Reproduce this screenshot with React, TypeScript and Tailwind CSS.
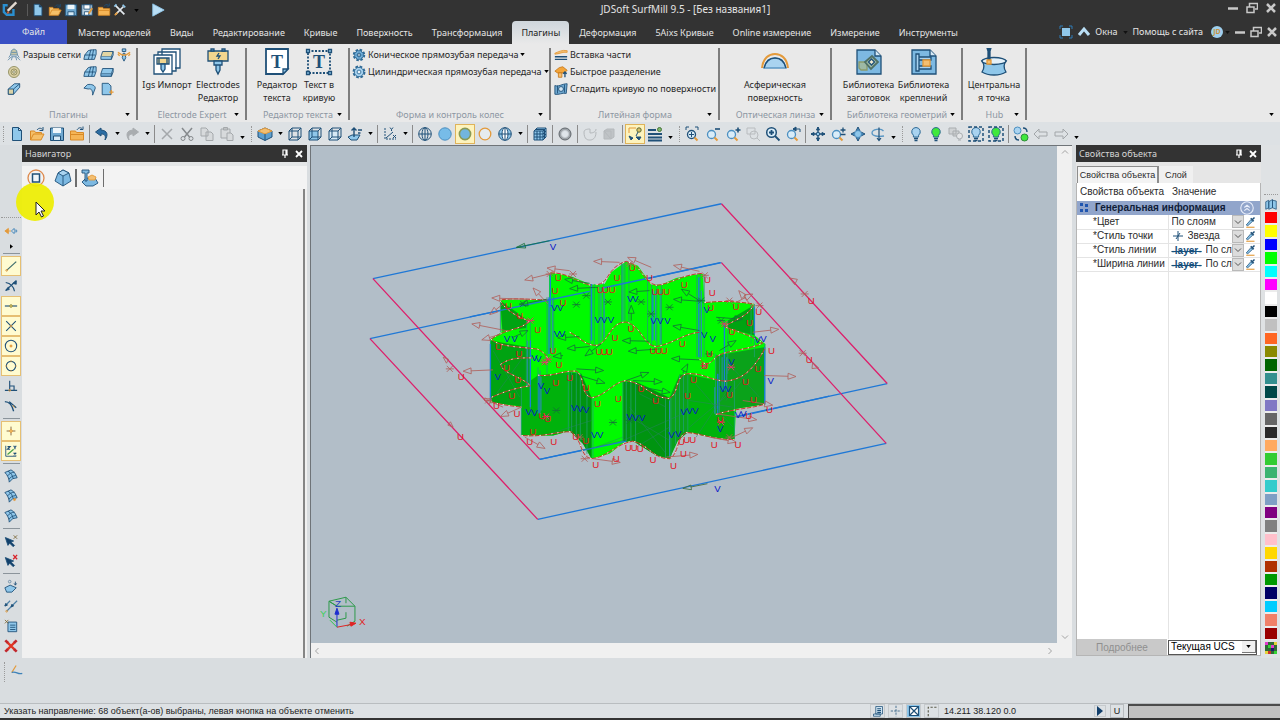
import React from 'react';

const NAVY = '#1f5078';
const SKY = '#8fc7ea';
const ORANGE = '#e39a3b';

const bulb = (fill: string) => (
  <>
    <path d="M8 1.5a4.3 4.3 0 0 0-2.6 7.7V11h5.2V9.2A4.3 4.3 0 0 0 8 1.5z" fill={fill} stroke="#2f6a96" />
    <path d="M6 12.5h4M6.5 14.5h3" stroke={NAVY} strokeWidth="1.6" />
  </>
);

const lens = (color = '#4b8fc0') => (
  <>
    <circle cx="6.5" cy="8.5" r="4" fill="#d9ecf8" stroke={color} strokeWidth="1.3" />
    <path d="M9.5 11.5l3 3" stroke={ORANGE} strokeWidth="2" />
  </>
);

const wireCube = (front: string) => (
  <>
    <path d="M2 5h9v9H2z" fill={front} />
    <path d="M2 5l3-3h9v9l-3 3M11 5l3-3M5 2v9h9M2 14l3-3" />
  </>
);

const surface = (
  <>
    <path d="M1 4l7-3c4 2 6 6 7 9l-5 1-4 4C6 11 4 7 1 4z" fill={SKY} />
    <path d="M4.5 2.5c4 2 5 5 6 8.500M4 8c2-3 5-4 8-4.500M5.500 12c2-3 4-4 8-4.500" />
  </>
);

const icons: Record<string, React.ReactNode> = {
  newFile: <path d="M3.5 1.5h6l3 3v10h-9zM9.5 1.5v3h3" fill={SKY} />,
  open: (
    <>
      <path d="M1.5 14V5h4l1 1.5h6V8M1.5 14l3-6h10.5l-3 6z" fill="#f5c069" stroke="#d98a26" />
      <path d="M8 4c2-2.5 4-2 5.5-.5M14 1v3.5h-3.5" stroke={NAVY} />
    </>
  ),
  save: (
    <>
      <path d="M1.5 2h13v12.5h-13z" fill="#6fa8d0" />
      <path d="M4 2h8v5H4z" fill="#eef6fb" stroke="none" />
      <path d="M4.5 10h7v4.5h-7z" fill="#d6e9f5" />
    </>
  ),
  saveAs: (
    <>
      <path d="M2 2h12v12H2z" fill="#b9cfdf" />
      <path d="M4.5 2h7v5h-7zM5 10h5v4H5z" fill="#fff" />
      <path d="M14 6l-4 6" stroke={ORANGE} strokeWidth="2" />
    </>
  ),
  folder: (
    <>
      <path d="M1.5 14V5h5l1 1.5h7V14z" fill="#f5b556" stroke="#d98a26" />
      <path d="M1.5 8.5h13" stroke="#d98a26" />
      <path d="M8 4c1-2 3-3 5-1.5M14 .5v3h-3" stroke={NAVY} />
    </>
  ),
  undo: <path d="M7 2L1.5 6 7 10V8c4 0 5 2 4 6 3.5-5 2.5-9.5-4-10z" fill="#2b6da3" />,
  redo: <path d="M9 2l5.5 4L9 10V8c-4 0-5 2-4 6-3.5-5-2.5-9.5 4-10z" fill="#a9adb0" stroke="#a9adb0" />,
  cross: <path d="M3 3l10 10M13 3L3 13" stroke="#a4a8ab" strokeWidth="1.5" />,
  cut: (
    <g stroke="#85898c">
      <path d="M3 2l7.5 9M13 2l-7.5 9" strokeWidth="1.5" />
      <circle cx="4" cy="12.5" r="2" />
      <circle cx="12" cy="12.5" r="2" />
    </g>
  ),
  copy: <path d="M2 2h5l2 2v6H2zM7 6h5l2 2v6.5H7z" stroke="#a4a8ab" fill="#d7dadc" />,
  paste: (
    <g stroke="#a4a8ab" fill="#d7dadc">
      <path d="M2 3h9v9H2zM4.5 1.5h4V4h-4z" />
      <path d="M8 7h4l2 2v5.5H8z" />
    </g>
  ),
  block: (
    <>
      <path d="M8 2l7 3v6l-7 3.5L1 11V5z" fill="#5f9fce" />
      <path d="M8 2l7 3-7 3-7-3z" fill="#f3bf72" stroke={ORANGE} />
      <path d="M8 8v6.5" />
    </>
  ),
  cubeWire: wireCube('none'),
  cubeFront: wireCube(SKY),
  cubeRight: wireCube('#d6e9f5'),
  plane: (
    <>
      <path d="M1 11l4-2h8l-3 5H4z" fill={SKY} />
      <path d="M7 11V2M4.5 4.5L7 2l2.5 2.5M11 4h4M11 7h2.5" strokeWidth="1.4" />
    </>
  ),
  axes: (
    <>
      <path d="M3 2v11h11" strokeDasharray="2 1" />
      <path d="M4 12l7-6M8 1.5l1.5 2 1.5-2M9.5 3.5V5M11 9l3 3M14 9l-3 3" />
    </>
  ),
  globe: (
    <>
      <circle cx="8" cy="8" r="6.3" />
      <ellipse cx="8" cy="8" rx="3" ry="6.3" />
      <path d="M2 8h12M8 2v12" />
    </>
  ),
  globeBlue: (
    <>
      <circle cx="8" cy="8" r="6.3" fill={SKY} />
      <ellipse cx="8" cy="8" rx="3" ry="6.3" fill="#fff" />
      <path d="M2 8h12M8 2v12" />
    </>
  ),
  sphere: <circle cx="8" cy="8" r="6.2" fill="#77bce8" stroke="#4b8fc0" />,
  sphereRing: <circle cx="8" cy="8" r="5.6" fill="#72b5de" stroke="#8a9a55" strokeWidth="1.6" />,
  ring: <circle cx="8" cy="8" r="5.8" fill="#e6ebee" stroke={ORANGE} strokeWidth="1.3" />,
  ringGray: (
    <>
      <circle cx="8" cy="8" r="6" fill="#9da3a8" stroke="#62686d" />
      <circle cx="8" cy="8" r="3.6" fill="#dfe5ea" stroke="#c7cdd2" />
    </>
  ),
  gridCube: (
    <>
      <path d="M2 5l3-3h9v9l-3 3H2z" fill={SKY} />
      <path d="M2 5h9v9M11 5l3-3M5 5v9M8 5v9M2 8h9l3-3M2 11h9l3-3M3.5 3.5h9V12" />
    </>
  ),
  ghostCup: <path d="M2 6c0 8 4 8 6 8s6-1 6-8M2 6c0-3 5-3 6-3v4c3 0 6-1 6-4" stroke="#b5b9bc" />,
  ghostBlock: <path d="M2 5h7v8H2zM2 5l3-2h7v8l-3 2z" stroke="#b5b9bc" fill="#bfc3c6" />,
  pick: (
    <>
      <path d="M2 2v5M2 2h7" stroke={ORANGE} />
      <circle cx="12" cy="4" r="2.2" fill="#d6c06a" stroke="#5c6a35" />
      <path d="M11 6l-2 4M2 10l2 4 2-2zM9 11l3 3 2-3z" fill={NAVY} />
    </>
  ),
  layers: (
    <>
      <path d="M1 4h8M1 8h14M1 11.5h14M1 14.5h14" strokeWidth="1.8" />
      <circle cx="12.5" cy="3.5" r="2" fill="#7db96a" stroke="#47733a" />
    </>
  ),
  zoomWindow: (
    <>
      {lens(NAVY)}
      <path d="M4 8.5h5M6.5 6v5M1 1h3M1 1v3M10 1h3v3" />
    </>
  ),
  zoomMinus: <>{lens()}<path d="M10 3h5" strokeWidth="1.6" /></>,
  zoomPlus: <>{lens()}<path d="M10.5 4h5M13 1.5v5" strokeWidth="1.6" /></>,
  zoomGhost: (
    <g stroke="#b9bcbf">
      <path d="M2 2h8v6H2z" />
      <circle cx="9" cy="9" r="4" />
      <path d="M12 12l3 3" />
    </g>
  ),
  zoomIn: (
    <>
      <circle cx="6.5" cy="6.5" r="4.8" fill="#d9ecf8" strokeWidth="1.5" />
      <path d="M10 10l4.5 4.5M4 6.5h5M6.5 4v5" strokeWidth="1.8" />
    </>
  ),
  zoomBack: <>{lens()}<path d="M8 3h7M8 3l3-2v4zM15 3v3" fill={NAVY} /></>,
  zoomRange: <>{lens()}<path d="M10.5 4h5M13 1.5v5M10.5 8.5h5" strokeWidth="1.3" /></>,
  pan: (
    <>
      <path d="M1 8h14M8 1v14" strokeWidth="1.3" />
      <path d="M8 1L6.500 4h3zM8 15l-1.500-3h3zM1 8l3-1.500v3zM15 8l-3-1.500v3z" fill={NAVY} />
      <circle cx="8" cy="8" r="1.8" fill={SKY} />
    </>
  ),
  orbit: (
    <>
      <path d="M8 1L6 5h4zM8 15l-2-4h4zM1 8l4-2v4zM15 8l-4-2v4z" fill="#4d8fc0" />
      <circle cx="8" cy="8" r="3.5" fill={SKY} stroke="#4d8fc0" />
    </>
  ),
  rotate: (
    <>
      <path d="M13.500 5C11 2 2 3 2 7c0 3 6 4 12 3" stroke="#5b97c4" strokeWidth="1.3" />
      <path d="M9 1.500v13M7 12l2 2.500L11 12" strokeWidth="1.2" />
    </>
  ),
  bulb: bulb('#a9d3f0'),
  bulbGreen: bulb('#3fe83c'),
  bulbGhost: (
    <g stroke="#a9adb0">
      <path d="M1 2h7v6H1zM5 5h6v5H5z" fill="#cfd2d4" />
      <circle cx="11.5" cy="10" r="3" fill="#e4e6e8" />
      <path d="M10 14h3" />
    </g>
  ),
  bulbSelect: <>{bulb('#a9d3f0')}<path d="M1 1h14v14H1z" strokeDasharray="3 2" strokeWidth="1.5" /></>,
  bulbSelectGreen: <>{bulb('#3fe83c')}<path d="M1 1h14v14H1z" strokeDasharray="3 2" strokeWidth="1.5" /></>,
  swap: (
    <>
      <circle cx="4.5" cy="4.5" r="3.5" fill="#a9d3f0" stroke="#4b8fc0" />
      <circle cx="11.5" cy="11.5" r="3.5" fill="#3fe83c" stroke="#2f8a3a" />
      <path d="M10 2c3 0 4 2 4 4M2 10c0 3 2 4 4 4" strokeWidth="1.4" />
    </>
  ),
  back: <path d="M1 8l5-5v3h8v4H6v3z" stroke="#a2a6a9" />,
  forward: <path d="M15 8l-5-5v3H2v4h8v3z" stroke="#a2a6a9" />,
  tools: (
    <>
      <path d="M3 13L12 4M3 3l10 10" stroke="#e3e9ee" strokeWidth="2" />
      <path d="M11 2l3 3M1.5 4L4 1.5" stroke={SKY} strokeWidth="2" />
      <path d="M2 14l3-3" stroke={ORANGE} strokeWidth="2" />
    </>
  ),
  play: <path d="M2 1l13 7-13 7z" fill="#b9def5" stroke="#8fc7ea" />,
  // left snap bar
  snapMove: (
    <>
      <path d="M1 8l4-3v6zM5 8h3M4 6v4" stroke={ORANGE} fill={ORANGE} />
      <path d="M8.5 8l3-3v2h3v2h-3v2z" stroke="#3e82b8" />
    </>
  ),
  snapLine: <><path d="M3 13L14 3" stroke="#3c6b6b" strokeWidth="1.4" /><circle cx="3" cy="13" r="1" stroke={ORANGE} /></>,
  snapNear: (
    <>
      <path d="M2 4c6 1 9 5 10 10M2 13L14 2" strokeWidth="1.4" />
      <path d="M10 5l4-3v4zM2 13l3-4 1 3z" fill={NAVY} />
    </>
  ),
  snapMid: <><path d="M1 8h14" strokeWidth="1.3" /><circle cx="8" cy="8" r="1.5" fill="#f3cd74" stroke="#8c8a3a" /></>,
  snapCross: <><path d="M2.5 2.5l11 11M13.5 2.5l-11 11" strokeWidth="1.2" /><circle cx="8" cy="8" r="1" stroke={ORANGE} /></>,
  snapCenter: <><circle cx="8" cy="8" r="6.5" strokeWidth="1.2" /><circle cx="8" cy="8" r="1.2" fill={ORANGE} stroke={ORANGE} /></>,
  snapQuad: <><circle cx="8" cy="8" r="5.3" strokeWidth="1.3" /><path d="M8 1.5v2M8 12.5v2M1.5 8h2M12.5 8h2" stroke={ORANGE} /></>,
  snapPerp: <><path d="M6.5 2v11M1 13h14M6.5 8h5v5" strokeWidth="1.3" /><circle cx="6.5" cy="13" r="1" stroke={ORANGE} /></>,
  snapTan: <><path d="M1 3c5 0 8 3 10 11M6 3l8 7" strokeWidth="1.5" /><path d="M10 7l2 3" stroke={ORANGE} /></>,
  snapPoint: <><path d="M8 3v10M3 8h10" stroke="#7d5a35" /><circle cx="8" cy="8" r="1.5" fill="#f3cd74" stroke={ORANGE} /></>,
  snapAxis: (
    <>
      <path d="M2 2v12M2 14h12" />
      <path d="M4 3h3L4 6h3M11 2l1.5 2L14 2M12.5 4v2M11 10l3 3M14 10l-3 3" strokeWidth="1.3" />
      <path d="M4 12l7-6" stroke="#4aa04a" strokeWidth="1.4" />
    </>
  ),
  surface,
  surfaceMark: <>{surface}<circle cx="12" cy="12" r="1.2" fill={ORANGE} stroke={ORANGE} /></>,
  select: (
    <>
      <path d="M1.5 4l3 9 2-2.5 4 4 1.5-1.5-4-4L11 8z" fill="#12406b" />
      <path d="M11 1.5l4 4M15 1.5l-4 4" stroke="#7d6a3a" />
    </>
  ),
  deselect: (
    <>
      <path d="M1.5 4l3 9 2-2.5 4 4 1.5-1.5-4-4L11 8z" fill="#12406b" />
      <path d="M10.5 1l4.500 5M15 1l-4.500 5" stroke="#d8232a" strokeWidth="1.5" />
    </>
  ),
  project: (
    <>
      <path d="M1 10l6-3 7 3-5 5H3z" fill={SKY} />
      <circle cx="6.5" cy="3" r="1.5" stroke="#6a8aa5" />
      <path d="M13 3v4M11.5 5L13 7l1.5-2" />
    </>
  ),
  offset: (
    <>
      <path d="M3 14L15 2M1 8l6-6" stroke="#4b7fa5" strokeWidth="1.3" />
      <path d="M1 8l3-1-2-2zM8 9l3-1-2-2z" fill={NAVY} />
      <circle cx="3" cy="14" r="1" stroke={ORANGE} />
    </>
  ),
  list: (
    <>
      <path d="M4.5 3.5h10v11h-10z" fill={SKY} />
      <path d="M7 7h6M7 9.5h6M7 12h6" />
      <path d="M1 1l4 4M5 1L1 5" stroke="#7d6a3a" />
    </>
  ),
  cancel: (
    <>
      <path d="M3 3l10 10M13 3L3 13" stroke="#e03524" strokeWidth="2.6" />
      <path d="M1.5 1.5l3 3M14.5 1.5l-3 3M1.5 14.5l3-3M14.5 14.500l-3-3" stroke="#c0282e" strokeWidth="3" />
    </>
  ),
  sketch: <><path d="M2 12l5-8" stroke={ORANGE} strokeWidth="1.4" /><path d="M2 12c5-2 7 3 12 1" stroke="#3e82b8" strokeWidth="1.4" /></>,
  // ribbon, small
  mesh: (
    <>
      <path d="M5 3l3-2 3 2 1 5H4z" fill="#c9c7a8" stroke="#5f8aa8" />
      <path d="M1 14l4-4h6l4 4M4 8l-2 3M12 8l2 3M5 14l1-4M11 14l-1-4M5 5h6" stroke="#5f8aa8" />
    </>
  ),
  washer: (
    <>
      <circle cx="8" cy="8" r="6.3" fill="#dcd0a4" stroke="#8c8a5a" />
      <circle cx="8" cy="8" r="3.5" stroke="#8c8a5a" />
      <circle cx="8" cy="8" r="1.5" fill="#e9e9e9" stroke="#8c8a5a" />
    </>
  ),
  bar: (
    <>
      <path d="M1.5 8l7-6h6v4l-7 8h-6z" fill={SKY} />
      <path d="M1.5 8h6v6h-6z" fill="#d9d2a8" />
      <path d="M7.5 8l7-6" />
    </>
  ),
  patch: (
    <>
      <path d="M1 13l1-5 4-5c3-1 6-1 9-1v5l-2 6z" fill={SKY} />
      <path d="M2 8h12M9 2L6 13M12 2l-2 11" />
    </>
  ),
  slab: <><path d="M1 10l2-6h12l-2 6z" fill="#e2d6a3" /><path d="M1 10v3h12v-3M13 13l2-5V4" fill={SKY} /></>,
  slabBlue: <><path d="M1 10l2-6h12l-2 6z" fill={SKY} /><path d="M1 10v3h12v-3M13 13l2-5V4" fill="#6fa8d0" /></>,
  fold: <path d="M1 7l4-4c5-1 9 1 9 4l-3 8c0-5-1-8-5-7z" fill={SKY} />,
  addFile: <><path d="M2.5 1.5h7l3 3v10h-10z" fill={SKY} /><path d="M13 9v5M10.5 11.5h5" stroke={ORANGE} strokeWidth="1.5" /></>,
  spindle: (
    <>
      <path d="M6 1h4v3H6zM7 6h2l1 5-2 4-2-4z" fill={SKY} />
      <path d="M1 5l5 3h4l5-3M3 9l-2-2M13 9l2-2" stroke={ORANGE} strokeWidth="1.6" />
    </>
  ),
  bevelGear: (
    <>
      <circle cx="8" cy="8" r="5.9" stroke="#2f6a96" strokeWidth="2.4" strokeDasharray="2.8 1.833" />
      <circle cx="8" cy="8" r="5" fill="#7ab4dc" stroke="#2f6a96" />
      <path d="M8 4v8M4 8h8M5 5l6 6M11 5l-6 6" stroke="#3e7fae" />
      <circle cx="8" cy="8" r="1.6" fill="#e9f3fa" />
    </>
  ),
  spurGear: (
    <>
      <circle cx="8" cy="8" r="6.2" stroke="#2f6a96" strokeWidth="2.4" strokeDasharray="3 1.869" />
      <circle cx="8" cy="8" r="5.300" fill="#a9d3f0" stroke="#2f6a96" />
      <circle cx="8" cy="8" r="2.2" fill="#e9f3fa" stroke="#2f6a96" />
    </>
  ),
  insert: (
    <>
      <path d="M1 6c5-2 8-4 14-3v2C10 4 6 7 1 7z" fill="#f3bf72" stroke={ORANGE} />
      <path d="M1 10h14M1 13h14" strokeWidth="1.5" />
    </>
  ),
  split: (
    <>
      <path d="M1 7l5-4 4-1 5 4-3 3H4z" fill="#f3a53a" stroke="#c97a1d" />
      <path d="M5 9h4v5H5z" fill="#f3bf72" stroke="#c97a1d" />
      <path d="M12.500 14V8M10.500 10l2-2 2 2" strokeWidth="1.5" />
    </>
  ),
  smooth: (
    <>
      <path d="M1 4c4 2 8-2 14-2l-1 11c-5-1-8 2-13 1z" fill="#6fa8d0" />
      <circle cx="8" cy="8" r="2.8" fill="#cfe4f3" />
      <path d="M4 4v9M12 3v9" />
    </>
  ),
  // status bar
  sheet: <><path d="M5 2h9v10H5zM2 12h9v3H2z" fill="#cfe4f3" /><path d="M7 5h5M7 7.5h5M7 10h5" strokeWidth="1.4" /></>,
  crosshair: <path d="M8 1v14M1 8h14" strokeDasharray="3 1.5" />,
  boxCross: <><path d="M2 2h12v12H2z" fill="#fff" strokeWidth="1.6" /><path d="M2 2l12 12M14 2L2 14" strokeWidth="1.6" /></>,
  corner: <path d="M3 15V3h12" strokeDasharray="3 2" stroke="#5a5a4a" strokeWidth="1.5" />,
  picker: (
    <>
      <path d="M3 12l6-7 2.5 2L5 13z" fill={SKY} />
      <path d="M9 3l4 4M11 5l3-3" strokeWidth="2" />
      <path d="M3 15h11" stroke={ORANGE} strokeWidth="1.5" />
    </>
  ),
  sheets: <path d="M1 5l4-2v10l-4 2zM5 5l5-3v11l-5 2zM10 3l5 1v11l-5-2z" fill={SKY} />,
};

const Icon = ({ name, className = 'w-4 h-4' }: { name: string; className?: string }) => (
  <svg viewBox="0 0 16 16" className={`${className} shrink-0`} fill="none" stroke={NAVY} strokeWidth="1" aria-hidden="true">
    {icons[name]}
  </svg>
);

const Caret = ({ className = 'text-black' }: { className?: string }) => (
  <svg viewBox="0 0 6 4" className={`w-[5px] h-[3px] shrink-0 ${className}`} aria-hidden="true">
    <path d="M0 0h6L3 4z" fill="currentColor" />
  </svg>
);

const WindowButtons = ({ className }: { className: string }) => (
  <div className={`flex items-center text-[#c9c9c9] ${className}`}>
    <button aria-label="Свернуть">
      <svg viewBox="0 0 12 12" className="w-3 h-3"><path d="M1 6.5h10" stroke="currentColor" strokeWidth="2.5" /></svg>
    </button>
    <button aria-label="Восстановить">
      <svg viewBox="0 0 12 12" className="w-3 h-3" fill="none" stroke="currentColor" strokeWidth="1.5"><path d="M1 5h7v5.5H1zM3.5 4.5v-3h8V7H9" /></svg>
    </button>
    <button aria-label="Закрыть">
      <svg viewBox="0 0 12 12" className="w-3 h-3"><path d="M2 2l8 8M10 2l-8 8" stroke="currentColor" strokeWidth="2.5" /></svg>
    </button>
  </div>
);

const TitleBar = () => (
  <header className="flex items-center h-5 bg-[#333333] text-[#e4e4e4]">
    <div className="flex items-center w-[165px]">
      <svg viewBox="0 0 20 18" className="w-5 h-4.5 mr-2" fill="none" aria-hidden="true">
        <path d="M8 4H4v7l3 3h7V8" stroke="#2a8fd0" strokeWidth="2.5" />
        <path d="M8 10l9-9" stroke="#e0d8d0" strokeWidth="2.5" />
        <path d="M8 10l-1 3 3-1z" fill="#d8653a" />
      </svg>
      <span className="w-px h-3 bg-[#5a5a5a] mr-0.5" />
      {['newFile', 'open', 'save', 'saveAs', 'folder', 'tools'].map(name => (
        <button key={name} aria-label={name} className="flex justify-center w-[17px]">
          <Icon name={name} className="w-3.5 h-3.5" />
        </button>
      ))}
      <Caret className="text-black ml-1.5 mr-1" />
      <button aria-label="play" className="ml-2"><Icon name="play" className="w-3.5 h-3.5" /></button>
    </div>
    <h1 className="flex-1 text-center text-[10px] leading-4 pb-0.5">JDSoft SurfMill 9.5 - [Без названия1]</h1>
    <WindowButtons className="w-[74px] justify-end gap-[7px] pr-[3px] pb-1" />
  </header>
);

const menuItems = [
  'Мастер моделей', 'Виды', 'Редактирование', 'Кривые', 'Поверхность', 'Трансформация',
  'Плагины', 'Деформация', '5Aixs Кривые', 'Online измерение', 'Измерение', 'Инструменты',
];

const MenuBar = () => (
  <nav className="flex gap-px h-6 bg-[#333333] text-[#e4e4e4] text-[9px]">
    <button className="w-[67px] bg-[#3a50c4] mr-px">Файл</button>
    {menuItems.map(item => (
      <button
        key={item}
        className={item === 'Плагины'
          ? 'px-[9px] mt-px pt-px rounded-t-sm bg-linear-to-b from-[#cfd6dc] to-[#e9e9e9] text-[#222222]'
          : 'px-[9px] pt-0.5'}
      >
        {item}
      </button>
    ))}
    <div className="flex items-center ml-auto pr-0.5">
      <svg viewBox="0 0 14 14" className="w-3.5 h-3.5 mr-1" fill="none" aria-hidden="true">
        <path d="M3 3h8v8H3z" fill={SKY} />
        <path d="M1 4V1h3M10 1h3v3M13 10v3h-3M4 13H1v-3" stroke="#2f7db8" />
      </svg>
      <svg viewBox="0 0 14 14" className="w-3.5 h-3.5 mr-1" fill="none" aria-hidden="true">
        <path d="M2 10l5-6 5 6" stroke="#b9def5" strokeWidth="3" />
      </svg>
      <button className="flex items-center gap-1.5">Окна <Caret className="text-[#111111]" /></button>
      <button className="ml-1">Помощь с сайта</button>
      <button aria-label="JD" className="flex items-center gap-0.5 ml-2 mr-1">
        <span className="flex items-center justify-center w-3 h-3 rounded-full bg-[#9fd0ee] text-[7px] font-bold text-[#c9943f]">JD</span>
        <Caret className="text-[#111111]" />
      </button>
      <WindowButtons className="gap-1" />
    </div>
  </nav>
);

const SmallButton = ({ icon, label, caret }: { icon: string; label?: string; caret?: boolean }) => (
  <button aria-label={label ?? icon} className="flex items-center gap-0.5 h-[17px] whitespace-nowrap">
    <Icon name={icon} className="w-3.5 h-3.5" />
    {label && <span>{label}</span>}
    {caret && <Caret />}
  </button>
);

const BigButton = ({ lines, className, children }: { lines: string[]; className: string; children: React.ReactNode }) => (
  <button className={`flex flex-col items-center leading-[13px] whitespace-nowrap ${className}`}>
    <svg viewBox="0 0 28 28" className="w-7 h-7 mb-0.5 shrink-0" fill="none" stroke={NAVY} strokeWidth="1.3" aria-hidden="true">
      {children}
    </svg>
    {lines.map(line => <span key={line}>{line}</span>)}
  </button>
);

const Group = ({ title, className, children }: { title: string; className: string; children: React.ReactNode }) => (
  <section className={`flex flex-col justify-between shrink-0 border-r-2 border-[#7d7d7d] ${className}`}>
    {children}
    <div className="flex items-center h-[11px] pl-3 pr-1.5">
      <h2 className="flex-1 text-center text-[#8d97a3] leading-[11px] whitespace-nowrap">{title}</h2>
      <Caret />
    </div>
  </section>
);

const Ribbon = () => (
  <div className="flex h-[78px] pt-1 pb-0.5 bg-[#e9e9e9] text-[9px] text-[#262626]">
    <Group title="Плагины" className="w-[138px]">
      <div className="flex pl-[7px] -mt-0.5">
        <div className="flex flex-col w-[76px]">
          <SmallButton icon="mesh" label="Разрыв сетки" />
          <SmallButton icon="washer" />
          <SmallButton icon="bar" />
        </div>
        <div className="grid grid-cols-3 gap-x-[3px]">
          {['patch', 'slab', 'spindle', 'patch', 'slabBlue'].map((name, i) => <SmallButton key={i} icon={name} />)}
          <span />
          <SmallButton icon="fold" />
          <SmallButton icon="addFile" />
        </div>
      </div>
    </Group>
    <Group title="Electrode Expert" className="w-[109px]">
      <div className="flex pl-[3px]">
        <BigButton lines={['Igs Импорт']} className="w-[52px]">
          <path d="M9 7V1h18v19h-5M5 10V4h18v19h-4" fill="#fff" />
          <path d="M1 7h18v19H1z" fill="#fff" />
          <path d="M4 10h12v6H4z" fill="#f3d68e" />
          <path d="M8 16h4v5l-2 3-2-3zM6 10v6M14 10v6" fill={SKY} />
        </BigButton>
        <BigButton lines={['Electrodes', 'Редактор']} className="w-[50px]">
          <path d="M4 3h20v10H4z" fill="#f3d68e" />
          <path d="M7 1h3v2H7zM18 1h3v2h-3zM10 13h8v4h-8zM12 17h4v5l-2 4-2-4z" fill={SKY} />
          <path d="M15 5l-2 3h3l-2 3" />
        </BigButton>
      </div>
    </Group>
    <Group title="Редактор текста" className="w-[103px]">
      <div className="flex pl-2">
        <BigButton lines={['Редактор', 'текста']} className="w-[44px]">
          <path d="M3 1h22v20l-5 5H3z" fill="#fff" strokeWidth="1.8" />
          <path d="M25 21h-5v5z" fill={SKY} />
          <text x="14" y="20" textAnchor="middle" fontSize="18" fontWeight="700" fill={NAVY} stroke="none" fontFamily="Liberation Serif, serif">T</text>
        </BigButton>
        <BigButton lines={['Текст в', 'кривую']} className="w-[40px]">
          <path d="M3 3h22v22H3z" strokeDasharray="2 1.5" strokeWidth="1.8" />
          <path d="M1.5 1.5h3v3h-3zM23.5 1.5h3v3h-3zM1.5 23.5h3v3h-3zM23.5 23.5h3v3h-3z" fill={SKY} />
          <text x="14" y="20" textAnchor="middle" fontSize="18" fontWeight="700" fill={NAVY} stroke="none" fontFamily="Liberation Serif, serif">T</text>
        </BigButton>
      </div>
    </Group>
    <Group title="Форма и контроль колес" className="w-[201px]">
      <div className="flex flex-col items-start pl-0.5 -mt-0.5">
        <SmallButton icon="bevelGear" label="Коническое прямозубая передача" caret />
        <SmallButton icon="spurGear" label="Цилиндрическая прямозубая передача" caret />
      </div>
    </Group>
    <Group title="Литейная форма" className="w-[169px]">
      <div className="flex flex-col items-start pl-[3px] -mt-0.5">
        <SmallButton icon="insert" label="Вставка части" />
        <SmallButton icon="split" label="Быстрое разделение" />
        <SmallButton icon="smooth" label="Сгладить кривую по поверхности" />
      </div>
    </Group>
    <Group title="Оптическая линза" className="w-[112px]">
      <div className="flex justify-center">
        <BigButton lines={['Асферическая', 'поверхность']} className="w-[80px]">
          <path d="M3 20c2-8 7-10 11-10s9 2 11 10z" fill="#a9d3f0" stroke="#5b97c4" />
          <path d="M3 20c2-8 7-10 11-10s9 2 11 10" stroke={NAVY} />
          <path d="M1 20C2 10 8 6 14 6s12 4 13 14" stroke={ORANGE} strokeWidth="2" />
        </BigButton>
      </div>
    </Group>
    <Group title="Библиотека геометрий" className="w-[131px]">
      <div className="flex pl-[9px]">
        <BigButton lines={['Библиотека', 'заготовок']} className="w-[55px]">
          <path d="M2 2h18l6 6v18H2z" fill="#7db9e2" />
          <path d="M20 2v6h6" fill="#d6e9f5" />
          <path d="M4 14h8v8H6l-2-2z" fill="#9eb9a5" stroke="#8a9a6a" />
          <path d="M10 14l7-6 6 6-7 7z" fill="#9eb9a5" stroke="#4f7066" strokeWidth="1.8" />
          <path d="M16.500 11l3 3-3 3-3-3z" fill="#f0ead0" />
        </BigButton>
        <BigButton lines={['Библиотека', 'креплений']} className="w-[55px]">
          <path d="M2 2h18l6 6v18H2z" fill="#7db9e2" />
          <path d="M20 2v6h6" fill="#d6e9f5" />
          <path d="M6 6h3v17H6zM9 9h12v3H9zM9 18h12v3H9z" fill="#a9d3f0" />
          <path d="M13 12h7v6h-7z" fill="#f3bf72" stroke={ORANGE} />
        </BigButton>
      </div>
    </Group>
    <Group title="Hub" className="w-[64px]">
      <div className="flex justify-center">
        <BigButton lines={['Центральна', 'я точка']} className="w-[56px]">
          <path d="M2 13c3 4 2 8 0 11 6 4 18 4 24 0-2-3-3-7 0-11z" fill="#8fc7ea" />
          <ellipse cx="14" cy="13" rx="12" ry="3.5" fill="#e4f0f8" />
          <path d="M7 0h4l-1 3v9H8V3z" fill={NAVY} />
          <path d="M7 12h4v4H7z" fill="#f3bf72" stroke={ORANGE} />
        </BigButton>
      </div>
    </Group>
    <div className="flex flex-1 items-end justify-end pr-1.5 pb-1"><Caret /></div>
  </div>
);

// "|" separator, ":" grip, "v" caret, "_" low caret, "*" marks a pressed button
const toolbar = (
  'newFile open save folder | undo v redo v | cross cut copy paste _ : block v cubeWire cubeFront cubeRight plane v | axes v | ' +
  'globe sphere *sphereRing ring globeBlue v | gridCube | ringGray | ghostCup ghostBlock | *pick layers _ : ' +
  'zoomWindow zoomMinus zoomPlus zoomGhost zoomIn zoomBack | pan zoomRange orbit rotate _ : ' +
  'bulb bulbGreen bulbGhost bulbSelect bulbSelectGreen | swap back forward _'
).split(' ');

const Toolbar = () => (
  <div role="toolbar" className="flex items-center h-[23px] pl-[3px] bg-[#dde1e4]">
    <span className="w-1 h-4 border-l border-dotted border-[#9a9a9a]" />
    {toolbar.map((item, i) => {
      if (item === '|') return <span key={i} className="w-px h-[18px] mx-0.5 bg-[#8b8b8b]" />;
      if (item === ':') return <span key={i} className="w-1 h-4 ml-1 border-l border-dotted border-[#9a9a9a]" />;
      if (item === 'v') return <span key={i} className="flex justify-center w-2.5"><Caret /></span>;
      if (item === '_') return <span key={i} className="flex justify-center w-2.5 pt-2"><Caret /></span>;
      const active = item.startsWith('*');
      const name = item.replace('*', '');
      return (
        <button
          key={i}
          aria-label={name}
          className={`flex items-center justify-center w-5 h-5 ${active ? 'border border-[#dfb35a] bg-[#fdf3bd]' : ''}`}
        >
          <Icon name={name} />
        </button>
      );
    })}
  </div>
);

const sideTools = (
  'snapMove > | *snapLine snapNear *snapMid *snapCross *snapCenter *snapQuad snapPerp snapTan | *snapPoint *snapAxis | ' +
  'surface surfaceMark surface | select deselect | project offset list cancel'
).split(' ');

const SideBar = () => (
  <div role="toolbar" className="flex flex-col items-center w-[22px] shrink-0 pt-[72px] bg-[#d9dde0]">
    <span className="w-5 h-1 border-t border-dotted border-[#9a9a9a]" />
    {sideTools.map((item, i) => {
      if (item === '|') return <span key={i} className="w-[17px] h-px my-0.5 bg-[#8b949b]" />;
      if (item === '>') return <span key={i} className="flex items-center h-2.5"><Caret className="text-black -rotate-90" /></span>;
      const active = item.startsWith('*');
      const name = item.replace('*', '');
      return (
        <button
          key={i}
          aria-label={name}
          className={`flex items-center justify-center w-5 h-5 ${active ? 'border border-[#e6bf73] bg-[#fffbd0]' : ''}`}
        >
          <Icon name={name} className="w-3.5 h-3.5" />
        </button>
      );
    })}
  </div>
);

const PanelTitle = ({ children }: { children: string }) => (
  <div className="flex items-center h-[17px] px-[3px] bg-[#333333] text-[#d4d4d4] text-[9px]">
    <h2 className="flex-1">{children}</h2>
    <button aria-label="Закрепить" className="mr-1">
      <svg viewBox="0 0 10 10" className="w-2.5 h-2.5" fill="none" stroke="#ffffff" strokeWidth="1.2"><path d="M3 6V1h4v5M2 6h6M5 6v3M6 1v5" /></svg>
    </button>
    <button aria-label="Закрыть">
      <svg viewBox="0 0 10 10" className="w-2.5 h-2.5" stroke="#ffffff" strokeWidth="1.8"><path d="M2 2l6 6M8 2L2 8" /></svg>
    </button>
  </div>
);

const Navigator = () => (
  <aside className="flex flex-col w-[285px] shrink-0 bg-[#f0f0f0]">
    <PanelTitle>Навигатор</PanelTitle>
    <div className="flex items-center h-[27px] border-t-4 border-[#e4e6e7] bg-[#f3f3f3]">
      <button aria-label="Контур" className="flex justify-center w-7">
        <svg viewBox="0 0 18 18" className="w-[18px] h-[18px]" fill="none">
          <circle cx="9" cy="9" r="8" stroke="#dd8a4d" strokeWidth="1.3" />
          <path d="M5.5 5h7v8h-7z" fill="#eef4f8" stroke={NAVY} strokeWidth="1.5" />
        </svg>
      </button>
      <button aria-label="Тело" className="flex justify-center w-[27px] border-r-2 border-[#6e6e6e]">
        <svg viewBox="0 0 18 18" className="w-[18px] h-[18px]" fill="#7db9e2" stroke={NAVY} strokeWidth="0.9">
          <path d="M4 4l5-3 6 3 2 8-8 5-8-5z" />
          <path d="M4 4l5-3 6 3-6 3z" fill="#a9d3f0" />
          <path d="M9 7v10" />
        </svg>
      </button>
      <button aria-label="Обработка" className="flex justify-center w-[27px] border-r border-[#6e6e6e]">
        <svg viewBox="0 0 18 18" className="w-[18px] h-[18px]" fill="#7db9e2" stroke={NAVY} strokeWidth="0.9">
          <path d="M1 13l4-4h9l3 5-5 3H5z" />
          <path d="M1 1h7v3H6v8H4V4H1z" />
          <path d="M7 8l4-2 4 2-1 3H8z" fill="#f3bf72" stroke={ORANGE} />
        </svg>
      </button>
    </div>
    <div className="flex-1 mr-0.5 border-r-2 border-[#858585]" />
  </aside>
);

// ---- model view ----

const arrows: [number, number, number, number][] = [
  [450, 65, 372, 62], [238, 100, 165, 118], [300, 90, 232, 82], [690, 92, 612, 74], [545, 80, 474, 50],
  [235, 190, 190, 142], [170, 176, 66, 172], [100, 190, 60, 222], [118, 272, 6, 250], [95, 280, 36, 298],
  [70, 388, -20, 392], [885, 405, 980, 408], [850, 275, 928, 266], [850, 200, 808, 150], [800, 185, 850, 160],
  [790, 590, 850, 562], [590, 650, 685, 642], [370, 655, 452, 666], [165, 590, 226, 624], [155, 500, 92, 528],
  [820, 480, 910, 494], [740, 520, 862, 538], [100, 500, 40, 474], [720, 590, 800, 605],
];

const innerArrows: [number, number, number, number][] = [
  [360, 128, 285, 116], [385, 140, 300, 144], [540, 150, 478, 154], [690, 182, 612, 176], [690, 270, 610, 256],
  [540, 302, 458, 300], [570, 325, 476, 332], [360, 318, 292, 324], [690, 358, 606, 354], [330, 288, 264, 292],
  [320, 385, 402, 390], [330, 405, 406, 428], [470, 420, 538, 396], [490, 420, 578, 424], [520, 440, 602, 456],
  [395, 310, 346, 346], [485, 240, 485, 194], [230, 176, 150, 192], [690, 180, 636, 146], [640, 398, 655, 370],
  [280, 345, 250, 348], [740, 230, 820, 236], [750, 330, 800, 300], [130, 290, 175, 270],
];

const redLabels: [number, number][] = [
  [266, 121], [256, 161], [442, 122], [488, 92], [540, 122], [392, 158], [408, 158], [428, 158], [556, 162], [574, 162],
  [592, 163], [644, 141], [714, 128], [728, 167], [116, 206], [280, 195], [150, 235], [204, 278], [436, 300], [484, 274],
  [388, 342], [404, 342], [420, 342], [550, 341], [568, 341], [584, 341], [638, 318], [724, 212], [800, 208], [868, 222],
  [840, 256], [788, 284], [906, 341], [866, 393], [828, 433], [86, 328], [148, 349], [110, 391], [144, 427], [126, 477],
  [80, 507], [142, 529], [216, 536], [234, 544], [190, 583], [180, 615], [252, 615], [258, 435], [268, 382], [250, 340],
  [318, 598], [348, 612], [378, 683], [440, 664], [476, 633], [494, 633], [512, 634], [550, 667], [612, 686], [642, 650],
  [636, 615], [652, 609], [670, 609], [734, 624], [806, 623], [838, 537], [900, 519], [852, 489], [780, 474], [384, 500],
  [446, 486], [514, 456], [558, 490], [654, 476], [672, 426], [706, 386], [720, 350], [350, 450], [300, 422], [752, 548],
  [1026, 189], [1020, 367], [-26, 418], [-28, 598],
];

const blueLabels: [number, number][] = [
  [250, 28], [254, 212], [272, 212], [384, 248], [404, 246], [424, 246], [482, 184], [498, 184], [552, 250], [572, 250],
  [594, 250], [712, 218], [704, 292], [730, 304], [262, 290], [278, 288], [112, 303], [134, 303], [194, 360], [206, 364],
  [84, 418], [214, 446], [232, 460], [176, 524], [194, 526], [314, 513], [332, 515], [350, 517], [374, 592], [392, 592],
  [480, 540], [498, 542], [518, 542], [606, 594], [626, 590], [642, 524], [660, 522], [678, 520], [760, 456], [776, 454],
  [786, 374], [752, 574], [806, 534], [822, 530], [904, 430], [864, 308], [882, 304], [744, 755],
];

const drawArrow = ([x1, y1, x2, y2]: [number, number, number, number], i: number) => {
  const angle = Math.atan2(y2 - y1, x2 - x1);
  const bx = x2 - 24 * Math.cos(angle);
  const by = y2 - 24 * Math.sin(angle);
  const nx = 9 * Math.sin(angle);
  const ny = 9 * Math.cos(angle);
  return <path key={i} d={`M${x1} ${y1}L${bx} ${by}M${x2} ${y2}L${bx + nx} ${by - ny}L${bx - nx} ${by + ny}Z`} />;
};

const star = (x: number, y: number) => `M${x - 12} ${y}h24M${x - 9} ${y - 9}l18 18M${x + 9} ${y - 9}l-18 18`;

const topRim = 'M92 178C130 172 180 176 232 178M238 97C290 92 320 125 365 134M380 132C420 130 410 80 470 62C520 75 520 125 560 134C600 132 640 100 700 98M705 186C760 180 800 182 852 190';
const midRim = 'M92 182C115 215 150 232 178 240C160 268 110 262 64 296C90 320 150 318 205 326C240 345 240 365 225 372M205 404C250 410 280 388 322 392C350 420 330 460 366 472C410 465 430 425 470 420C530 430 540 470 598 474C630 460 615 410 650 400C700 395 720 420 770 422C820 415 850 390 886 325M300 275C330 290 350 318 385 314C420 300 420 245 470 244C520 260 520 315 560 318C610 310 640 280 690 275M690 355C710 380 720 370 740 350C760 330 830 330 880 308C840 280 790 270 765 258C800 235 840 225 852 192';
const lowRim = 'M64 484C90 492 120 496 155 500M155 585C220 592 260 572 305 574C340 600 330 650 366 655C410 652 440 610 490 602C540 615 550 655 600 655C630 640 620 590 650 576C700 580 740 600 795 597M740 522C790 505 840 505 884 492M66 470C110 450 150 440 182 436C160 410 100 400 92 372C120 350 160 352 190 352';

const verticals = [
  [92, 180, 275], [62, 296, 485], [170, 240, 440], [182, 240, 520], [205, 380, 520], [212, 390, 520], [232, 170, 400], [242, 96, 330],
  [252, 165, 330], [362, 130, 315], [374, 130, 315], [388, 130, 312], [402, 128, 300], [456, 66, 245], [466, 62, 242], [478, 66, 245],
  [534, 110, 300], [546, 132, 315], [562, 132, 318], [576, 130, 312], [682, 98, 350], [692, 98, 355], [704, 100, 350], [765, 240, 440],
  [775, 240, 400], [845, 190, 310], [855, 190, 350], [886, 310, 492], [738, 340, 525], [750, 340, 520], [296, 395, 572], [306, 394, 574],
  [320, 394, 585], [332, 400, 600], [352, 450, 640], [370, 472, 655], [460, 424, 605], [470, 424, 602], [484, 424, 602], [498, 424, 604],
  [588, 470, 655], [604, 470, 654], [618, 455, 610], [630, 404, 580], [642, 400, 576], [655, 404, 576], [795, 420, 597], [155, 440, 585],
];

const ModelView = () => (
  <svg viewBox="311 146 747 496" preserveAspectRatio="xMidYMid meet" className="flex-1 min-w-0 bg-[#b2bec8]" role="img" aria-label="Шестерня" fill="none">
    <g strokeWidth="1.3">
      <path d="M373 278l349-75M370 338l352-76M540 459l348-76M538 519l349-76" stroke="#1f78d6" />
      <path d="M722 203l166 180M722 262l165 181M373 278l167 181M370 338l168 181" stroke="#dd1f6b" />
    </g>
    <g transform="translate(470 240) scale(0.33333)">
      <path
        d="M238 95L300 105 365 132 405 130 425 95 470 62 505 75 530 110 545 132 575 132 620 112 700 98 705 185 760 182 852 188 856 285 888 310 885 492 800 505 795 598 720 590 650 575 625 600 600 655 560 645 490 602 465 605 420 640 366 655 340 610 300 572 250 585 155 585 155 500 62 485 62 295 95 275 92 177 238 178Z"
        fill="#00fa00"
      />
      <path d="M92 180L175 240 170 262 98 272ZM62 300L180 320 180 520 155 498 62 485ZM775 240L852 195 855 285 775 262Z" fill="#00a312" />
      <path d="M155 440L205 404 300 395 300 572 250 585 155 585ZM650 400L740 420 795 420 795 598 720 590 650 575Z" fill="#00b20c" />
      <path d="M300 395L335 400 366 472 366 655 340 610 300 572ZM460 424L500 424 600 472 600 655 560 645 490 602 460 605Z" fill="#009410" />
      <path d="M600 472L630 402 655 402 655 576 625 600 600 655ZM740 345L886 320 885 492 800 505 740 520Z" fill="#0aa21a" />
      <g stroke="#1f9f6e" strokeWidth="2.5">
        {verticals.map(([x, y1, y2], i) => <path key={i} d={`M${x} ${y1}V${y2}`} />)}
      </g>
      <path d="M182 300V500M208 400V520M238 170V340M242 96V200M366 130V300M550 150V300M688 110V350M765 250V450M745 400V520M855 200V280M886 320V492M62 310V480" stroke="#1a7fd8" strokeWidth="4" />
      <path d="M174 300V440M214 410V510M248 170V340M394 140V300M404 150V290M558 150V300M572 150V310M460 70V240M696 150V350M758 350V450M772 350V450M736 440V520M600 480V650" stroke="#2a8fb0" strokeWidth="3" />
      <path d="M0 229L360 152M400 142L752 66M210 657L470 602M800 530L1080 467" stroke="#1f78d6" strokeWidth="4" />
      <path d="M330 632L460 600 640 520M240 580L366 540M380 620L460 590M480 500L590 640M500 620L600 560M670 420L790 560M660 560L790 450M70 330L150 470M80 460L160 350M760 350L870 470M770 480L880 340M510 460L590 500M500 540L600 600M660 480L790 500M680 590L780 440" stroke="#2c7f6a" strokeWidth="2" opacity="0.7" />
      <g stroke="#c83a30" strokeWidth="3">
        <path d={topRim} />
        <path d={midRim} />
        <path d={lowRim} />
      </g>
      <g stroke="#f4f4e0" strokeWidth="3" strokeDasharray="4 14">
        <path d={topRim} />
        <path d={midRim} />
        <path d={lowRim} />
      </g>
      <g stroke="#b0605c" strokeWidth="2.5">
        {arrows.map(drawArrow)}
        <path d={[star(240, 100), star(480, 70), star(310, 100), star(706, 104), star(780, 180), star(870, 195), star(1006, 160), star(1000, 338), star(330, 590), star(345, 655), star(55, 480), star(780, 590), star(-60, 385)].join('')} />
        <path d="M960 112l24 4-8 16zM1030 366l18 16-20 2zM-80 350l16 6-6 12zM-50 560l-16-6 8-10z" />
      </g>
      <g stroke="#14703a" strokeWidth="2.5">
        {innerArrows.map(drawArrow)}
        <path d={[star(160, 190), star(320, 192), star(415, 184), star(350, 165), star(515, 184), star(600, 200), star(545, 220), star(430, 546), star(480, 540), star(260, 510), star(695, 180), star(755, 240), star(720, 340)].join('')} />
        <path d="M140 20L240 0M140 20l24-12 4 14z" />
      </g>
      <g stroke="#e8306c" strokeWidth="3">
        <path d={[star(235, 356), star(225, 365), star(704, 376), star(755, 545), star(230, 528), star(785, 380), star(182, 240), star(765, 250)].join('')} />
      </g>
      <g fill="#e0141e" fontSize="29" fontFamily="Liberation Sans, sans-serif" textAnchor="middle">
        {redLabels.map(([x, y], i) => <text key={i} x={x} y={y}>U</text>)}
      </g>
      <g fill="#0614c8" fontSize="29" fontFamily="Liberation Sans, sans-serif" textAnchor="middle">
        {blueLabels.map(([x, y], i) => <text key={i} x={x} y={y}>V</text>)}
      </g>
      <path d="M640 744l24-10 2 14zM664 740l50-10" stroke="#3d6a3a" strokeWidth="2.5" />
    </g>
    <g strokeWidth="1">
      <path d="M329 601l8 5h18v15l-8 5M329 601v16l8 5M329 601l17-4 9 9M337 606l-8-5M346 597v6M337 620l9-2v-6" stroke="#2d9a4a" />
      <path d="M337 627v-15M335 614l2-6 2 6z" stroke="#1f2fd0" fill="#1f2fd0" />
      <path d="M337 627l16-3M350 622l6 1-5 3z" stroke="#e02424" fill="#e02424" />
      <path d="M337 627l-7-7" stroke="#2fc84a" />
      <g fontSize="10" fontFamily="Liberation Sans, sans-serif">
        <text x="359" y="625" fill="#e02424">X</text>
        <text x="320" y="617" fill="#3fd05a">Y</text>
        <text x="335" y="607" fill="#1f3fc0">Z</text>
      </g>
    </g>
  </svg>
);

const Chevron = ({ className }: { className: string }) => (
  <svg viewBox="0 0 8 8" className={`w-2 h-2 ${className}`} fill="none" stroke="currentColor" aria-hidden="true">
    <path d="M1 2.5L4 5.5 7 2.5" />
  </svg>
);

const Viewport = () => (
  <main className="flex flex-col flex-1 min-w-0 ml-[3px] border-t border-l border-[#6f7478] bg-[#f0f0f0]">
    <div className="flex flex-1 min-h-0">
      <ModelView />
      <div className="flex flex-col items-center justify-between w-[15px] py-0.5 text-[#a3a3a3]">
        <Chevron className="rotate-180" />
        <Chevron className="" />
      </div>
    </div>
    <div className="flex items-center justify-between h-[15px] pl-0.5 pr-[18px] text-[#a3a3a3]">
      <Chevron className="rotate-90" />
      <Chevron className="-rotate-90" />
    </div>
  </main>
);

const Layer = () => <span className="font-bold text-[#17507c] line-through decoration-1">-layer-</span>;

const properties = [
  { id: 'color', label: '*Цвет', value: 'По слоям', mark: null },
  {
    id: 'point',
    label: '*Стиль точки',
    value: 'Звезда',
    mark: <svg viewBox="0 0 12 12" className="w-3 h-3 shrink-0" stroke={NAVY} aria-hidden="true"><path d="M1 6h10M6 1v10M4 9l4-6" /></svg>,
  },
  { id: 'line', label: '*Стиль линии', value: 'По слоям', mark: <Layer /> },
  { id: 'width', label: '*Ширина линии', value: 'По слоям', mark: <Layer /> },
];

const Properties = () => (
  <aside className="flex flex-col w-[185px] shrink-0 ml-1 mb-0.5 bg-[#e6e6e6]">
    <PanelTitle>Свойства объекта</PanelTitle>
    <div role="tablist" className="flex pt-1 pl-px font-['Liberation_Sans',sans-serif] text-[9px] text-[#2b2b2b] leading-4">
      <button role="tab" aria-selected="true" className="w-[82px] border border-b-0 border-r-2 border-[#8d8d8d] bg-[#f4f4f4]">Свойства объекта</button>
      <button role="tab" aria-selected="false" className="px-1.5 bg-[#f0f0f0]">Слой</button>
    </div>
    <div className="flex flex-col flex-1 border-x border-b border-[#b5b5b5] bg-white font-['Liberation_Sans',sans-serif] text-[10px] text-[#2b2b2b]">
      <table className="w-full table-fixed border-collapse">
        <colgroup>
          <col className="w-[91px]" />
          <col />
        </colgroup>
        <thead>
          <tr className="h-[18px] text-left">
            <th className="pl-[3px] py-0 font-normal whitespace-nowrap leading-3">Свойства объекта</th>
            <th className="pl-1 py-0 font-normal leading-3">Значение</th>
          </tr>
          <tr className="h-[14px] bg-[#91a5cb]">
            <th colSpan={2} className="p-0">
              <div className="flex items-center justify-between pl-0.5 pr-1.5 leading-3">
                <span className="flex items-center gap-1.5 text-[#101d38]">
                  <svg viewBox="0 0 10 10" className="w-2.5 h-2.5" aria-hidden="true"><path d="M1 0h3v3H1zM1 6h3v3H1zM6 1h3v3H6zM6 6h3v3H6z" fill="#1f55b0" /></svg>
                  Генеральная информация
                </span>
                <svg viewBox="0 0 13 13" className="w-3.5 h-3.5" fill="none" stroke="#e9eefa" aria-hidden="true"><circle cx="6.5" cy="6.5" r="5.8" /><path d="M4 6l2.5-2L9 6M4 9l2.5-2L9 9" /></svg>
              </div>
            </th>
          </tr>
        </thead>
        <tbody>
          {properties.map(p => (
            <tr key={p.id} className="h-[14px] border-b border-[#e4e4e4]">
              <td className="pl-4 py-0 whitespace-nowrap leading-3"><label htmlFor={p.id}>{p.label}</label></td>
              <td className="p-0 border-l border-[#e4e4e4]">
                <div className="flex items-center h-[13px] pl-[3px] pr-1">
                  {p.mark}
                  <select id={p.id} className={`flex-1 min-w-0 appearance-none leading-3 ${p.mark ? 'pl-1' : ''}`}>
                    <option>{p.value}</option>
                  </select>
                  <span className="flex items-center justify-center w-3 h-[13px] border border-[#b9b9b9] bg-[#dcdcdc] text-[#555555]"><Chevron className="" /></span>
                  <button aria-label="Выбрать"><Icon name="picker" className="w-3 h-3" /></button>
                </div>
              </td>
            </tr>
          ))}
        </tbody>
      </table>
      <div className="flex-1 ml-[91px] border-l border-[#e4e4e4]" />
      <div className="flex items-center h-4">
        <button disabled className="w-[90px] h-4 bg-[#c9c9c9] text-[#8f8f8f]">Подробнее</button>
        <div className="flex items-center w-[89px] h-[15px] ml-px border border-[#555555] bg-white">
          <select aria-label="UCS" className="flex-1 min-w-0 pl-0.5 appearance-none leading-3 text-black">
            <option>Текущая UCS</option>
          </select>
          <span className="flex items-center justify-center w-3.5 h-3 border-r border-b border-[#777777] bg-[#f0f0f0]"><Caret /></span>
        </div>
      </div>
    </div>
  </aside>
);

const palette = [
  '#ff0000', '#ffff00', '#0000ff', '#00ff00', '#00ffff', '#ff00ff', '#ffffff', '#000000',
  '#c0c0c0', '#ff6622', '#8a8a00', '#006400', '#338f8f', '#004848', '#8078c4', '#666666',
  '#2a2a2a', '#ffaa60', '#33cc33', '#3cb371', '#33cccc', '#7f9fc4', '#800080', '#808080',
  '#ffc0cb', '#ffd700', '#b03000', '#009900', '#000066', '#00ccff', '#f08068', '#990000',
];

const Palette = () => (
  <div className="flex flex-col items-center flex-1 max-w-[19px] pt-[49px] pb-1 bg-[#dfe2e4]">
    <span className="w-3.5 h-1 border-t border-dotted border-[#9a9a9a]" />
    <button aria-label="Слои" className="mb-px"><Icon name="sheets" className="w-3 h-3" /></button>
    <div className="flex flex-col flex-1 w-full items-center">
      {palette.map(color => (
        <button key={color} aria-label={color} className="flex-1 w-3 border-y border-[#ececec]" style={{ backgroundColor: color }} />
      ))}
    </div>
    <button aria-label="Другие цвета" className="mt-0.5">
      <svg viewBox="0 0 12 12" className="w-3 h-3">
        <path d="M0 0h12v12H0z" fill="#2e6b35" />
        <path d="M0 0h3v3H0zM6 3h3v3H6z" fill="#e23ad0" />
        <path d="M3 3h3v3H3zM9 9h3v3H9z" fill="#35d435" />
        <path d="M9 0h3v3H9zM0 9h3v3H0z" fill="#e2d23a" />
        <path d="M6 6h3v3H6z" fill="#1c1c6a" />
        <path d="M3 9h3v3H3z" fill="#d03030" />
      </svg>
    </button>
  </div>
);

const StatusBar = () => (
  <footer className="flex items-center h-[17px] border-t border-b-2 border-t-[#b9bdc0] border-b-[#333333] bg-[#dde1e4] font-['Liberation_Sans',sans-serif] text-[9px] text-[#222222]">
    <p className="flex-1 pl-1 pt-0.5 whitespace-nowrap">Указать направление: 68 объект(а-ов) выбраны, левая кнопка на объекте отменить</p>
    <div className="flex items-center w-[410px]">
      {['sheet', 'crosshair', 'boxCross', 'corner'].map(name => (
        <button key={name} aria-label={name} className={`flex justify-center w-[15px] mr-[3px] border border-[#c6cacd] ${name === 'boxCross' ? 'bg-[#8fc7ea]' : ''}`}>
          <Icon name={name} className="w-3 h-3" />
        </button>
      ))}
      <output className="flex-1 pl-0.5 pt-0.5">14.211 38.120 0.0</output>
      <button aria-label="Далее" className="px-0.5 border border-[#c6cacd]">
        <svg viewBox="0 0 6 10" className="w-1.5 h-2.5"><path d="M0 0l6 5-6 5z" fill="#123f6b" /></svg>
      </button>
      <button className="w-3.5 mx-1 border border-[#b9bdc0] leading-3">U</button>
      <div className="w-[152px] h-3.5 border-t-2 border-l border-[#4c4c4c] bg-[#c1c1c1]" />
    </div>
  </footer>
);

const Cursor = () => (
  <svg viewBox="0 0 40 40" className="absolute left-[15px] top-[37px] w-10 h-10 pointer-events-none" aria-hidden="true">
    <circle cx="20" cy="20" r="19" fill="#eeee00" opacity="0.92" />
    <path d="M21 20v13l3-3 2.5 5 2-1-2.5-5h4z" fill="#ffffff" stroke="#222222" />
  </svg>
);

export default function App() {
  return (
    <div className="flex flex-col min-h-screen bg-[#d9dde0] font-['Noto_Sans',sans-serif] overflow-hidden">
      <TitleBar />
      <MenuBar />
      <Ribbon />
      <Toolbar />
      <div className="relative flex flex-1">
        <SideBar />
        <Navigator />
        <Viewport />
        <Properties />
        <Palette />
        <Cursor />
      </div>
      <div className="flex items-start h-[45px] pl-1 pt-1">
        <span className="w-1.5 h-5 border-l border-dotted border-[#9a9a9a]" />
        <button aria-label="sketch"><Icon name="sketch" className="w-3.5 h-3.5" /></button>
      </div>
      <StatusBar />
    </div>
  );
}
